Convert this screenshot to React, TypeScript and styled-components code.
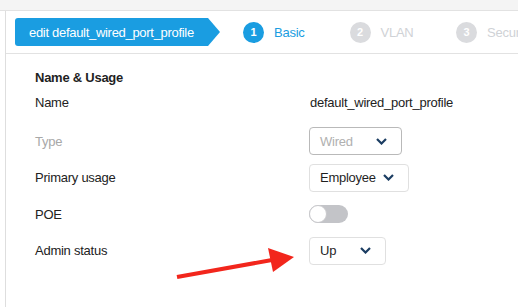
import React from "react";
import styled, { createGlobalStyle } from "styled-components";

const Global = createGlobalStyle`
  html, body { margin: 0; padding: 0; background: #ffffff; }
  body { font-family: "Liberation Sans", Arial, sans-serif; font-size: 13px; color: #222; letter-spacing: -0.25px; }
  #root { width: 518px; height: 307px; overflow: hidden; position: relative; }
`;

const Page = styled.div`
  position: relative;
  width: 518px;
  height: 307px;
  overflow: hidden;
`;

const TopBand = styled.div`
  height: 10px;
  background: #f4f4f4;
  border-bottom: 1px solid #e2e2e2;
`;

const Main = styled.div`
  margin-left: 5px;
  border-left: 1px solid #dedede;
  height: 296px;
`;

const Header = styled.div`
  height: 42px;
  border-bottom: 1px solid #e2e2e2;
  display: flex;
  align-items: center;
  padding-left: 9px;
  overflow: hidden;
`;

const Crumb = styled.div`
  width: 205px;
  height: 28px;
  flex: none;
  background: #1a9de1;
  color: #fff;
  display: flex;
  align-items: center;
  padding-left: 14px;
  box-sizing: border-box;
  border-radius: 3px 0 0 3px;
  clip-path: polygon(0 0, 193px 0, 205px 50%, 193px 100%, 0 100%);
  font-size: 13px;
  white-space: nowrap;
  letter-spacing: -0.3px;
  margin-right: 23px;
`;

const Step = styled.div`
  width: 106.5px;
  flex: none;
  display: flex;
  align-items: center;
  gap: 10px;
`;

const StepDot = styled.div<{ $active?: boolean }>`
  width: 21px;
  height: 21px;
  border-radius: 50%;
  background: ${(p) => (p.$active ? "#1a9de1" : "#dadbde")};
  color: #fff;
  font-size: 11px;
  font-weight: bold;
  display: flex;
  align-items: center;
  justify-content: center;
  flex: none;
  letter-spacing: 0;
`;

const StepLabel = styled.span<{ $active?: boolean }>`
  font-size: 13px;
  color: ${(p) => (p.$active ? "#1a9de1" : "#cfd2d6")};
  white-space: nowrap;
`;

const Content = styled.div`
  padding: 16px 0 0 29px;
`;

const SectionTitle = styled.div`
  font-weight: bold;
  font-size: 13px;
  line-height: 15px;
  height: 15px;
  color: #1f1f1f;
`;

const Field = styled.div<{ $gap: number }>`
  display: grid;
  grid-template-columns: 274px 1fr;
  align-items: center;
  height: 28px;
  margin-top: ${(p) => p.$gap}px;
`;

const Label = styled.div<{ $disabled?: boolean }>`
  font-size: 13px;
  color: ${(p) => (p.$disabled ? "#a8a8a8" : "#222")};
`;

const Value = styled.div`
  font-size: 13px;
  color: #222;
  padding-left: 1px;
`;

const Select = styled.div<{ $w: number; $disabled?: boolean }>`
  width: ${(p) => p.$w}px;
  height: 28px;
  box-sizing: border-box;
  border: 1px solid ${(p) => (p.$disabled ? "#b9b9b9" : "#e0e0e0")};
  border-radius: 4px;
  display: flex;
  align-items: center;
  justify-content: space-between;
  padding: 0 14px 0 10px;
  font-size: 13px;
  color: ${(p) => (p.$disabled ? "#b0b0b0" : "#1f1f1f")};
`;

const Toggle = styled.div`
  width: 39px;
  height: 18px;
  border-radius: 9px;
  background: #c3c4c8;
  position: relative;
`;

const Knob = styled.div`
  position: absolute;
  left: 0;
  top: 0;
  width: 18px;
  height: 18px;
  border-radius: 50%;
  background: #fff;
  box-sizing: border-box;
  border: 1px solid #c9c9cc;
`;

const ArrowLayer = styled.svg`
  position: absolute;
  left: 0;
  top: 0;
  pointer-events: none;
`;

const Chevron = () => (
  <svg width="11" height="7" viewBox="0 0 11 7">
    <path d="M1 1 L5.5 5.5 L10 1" fill="none" stroke="#1b3d62" strokeWidth="2.2" />
  </svg>
);

export default function App() {
  return (
    <Page>
      <Global />
      <TopBand />
      <Main>
        <Header>
          <Crumb>edit default_wired_port_profile</Crumb>
          <Step>
            <StepDot $active>1</StepDot>
            <StepLabel $active>Basic</StepLabel>
          </Step>
          <Step>
            <StepDot>2</StepDot>
            <StepLabel>VLAN</StepLabel>
          </Step>
          <Step>
            <StepDot>3</StepDot>
            <StepLabel>Security</StepLabel>
          </Step>
        </Header>
        <Content>
          <SectionTitle>Name &amp; Usage</SectionTitle>
          <Field $gap={3}>
            <Label>Name</Label>
            <Value>default_wired_port_profile</Value>
          </Field>
          <Field $gap={11}>
            <Label $disabled>Type</Label>
            <Select $w={93} $disabled>
              Wired
              <Chevron />
            </Select>
          </Field>
          <Field $gap={8.5}>
            <Label>Primary usage</Label>
            <Select $w={100}>
              Employee
              <Chevron />
            </Select>
          </Field>
          <Field $gap={8.5}>
            <Label>POE</Label>
            <Toggle>
              <Knob />
            </Toggle>
          </Field>
          <Field $gap={8.5}>
            <Label>Admin status</Label>
            <Select $w={77}>
              Up
              <Chevron />
            </Select>
          </Field>
        </Content>
      </Main>
      <ArrowLayer width="518" height="307" viewBox="0 0 518 307">
        <line x1="177" y1="277" x2="272" y2="260" stroke="#f2261c" strokeWidth="4" />
        <polygon points="268,248 294,257 273,272" fill="#f2261c" />
      </ArrowLayer>
    </Page>
  );
}
